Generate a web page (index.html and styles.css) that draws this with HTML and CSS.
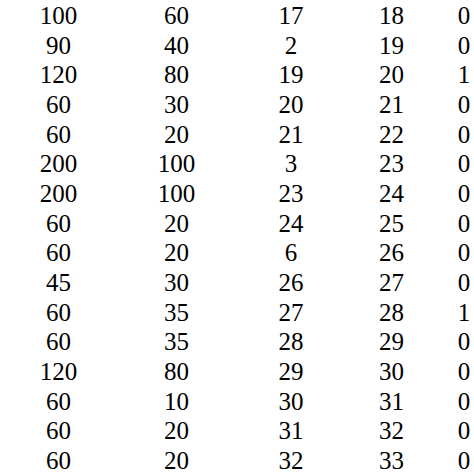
FILE: index.html
```html
<!DOCTYPE html>
<html>
<head>
<meta charset="utf-8">
<link rel="stylesheet" href="styles.css">
</head>
<body>
<div class="table">
  <div class="row"><span>100</span><span>60</span><span>17</span><span>18</span><span>0</span></div>
  <div class="row"><span>90</span><span>40</span><span>2</span><span>19</span><span>0</span></div>
  <div class="row"><span>120</span><span>80</span><span>19</span><span>20</span><span>1</span></div>
  <div class="row"><span>60</span><span>30</span><span>20</span><span>21</span><span>0</span></div>
  <div class="row"><span>60</span><span>20</span><span>21</span><span>22</span><span>0</span></div>
  <div class="row"><span>200</span><span>100</span><span>3</span><span>23</span><span>0</span></div>
  <div class="row"><span>200</span><span>100</span><span>23</span><span>24</span><span>0</span></div>
  <div class="row"><span>60</span><span>20</span><span>24</span><span>25</span><span>0</span></div>
  <div class="row"><span>60</span><span>20</span><span>6</span><span>26</span><span>0</span></div>
  <div class="row"><span>45</span><span>30</span><span>26</span><span>27</span><span>0</span></div>
  <div class="row"><span>60</span><span>35</span><span>27</span><span>28</span><span>1</span></div>
  <div class="row"><span>60</span><span>35</span><span>28</span><span>29</span><span>0</span></div>
  <div class="row"><span>120</span><span>80</span><span>29</span><span>30</span><span>0</span></div>
  <div class="row"><span>60</span><span>10</span><span>30</span><span>31</span><span>0</span></div>
  <div class="row"><span>60</span><span>20</span><span>31</span><span>32</span><span>0</span></div>
  <div class="row"><span>60</span><span>20</span><span>32</span><span>33</span><span>0</span></div>
</div>
</body>
</html>
```
FILE: styles.css
```css
html, body {
  margin: 0;
  padding: 0;
  background: #fff;
  overflow: hidden;
}
body {
  font-family: "Liberation Serif", "Times New Roman", serif;
  font-size: 25px;
  color: #000;
}
.table {
  padding-top: 1px;
  width: 491px;
}
.row {
  display: grid;
  grid-template-columns: 117px 119px 110px 91px 54px;
  height: 29.67px;
  line-height: 29.67px;
}
.row span {
  text-align: center;
}
```
